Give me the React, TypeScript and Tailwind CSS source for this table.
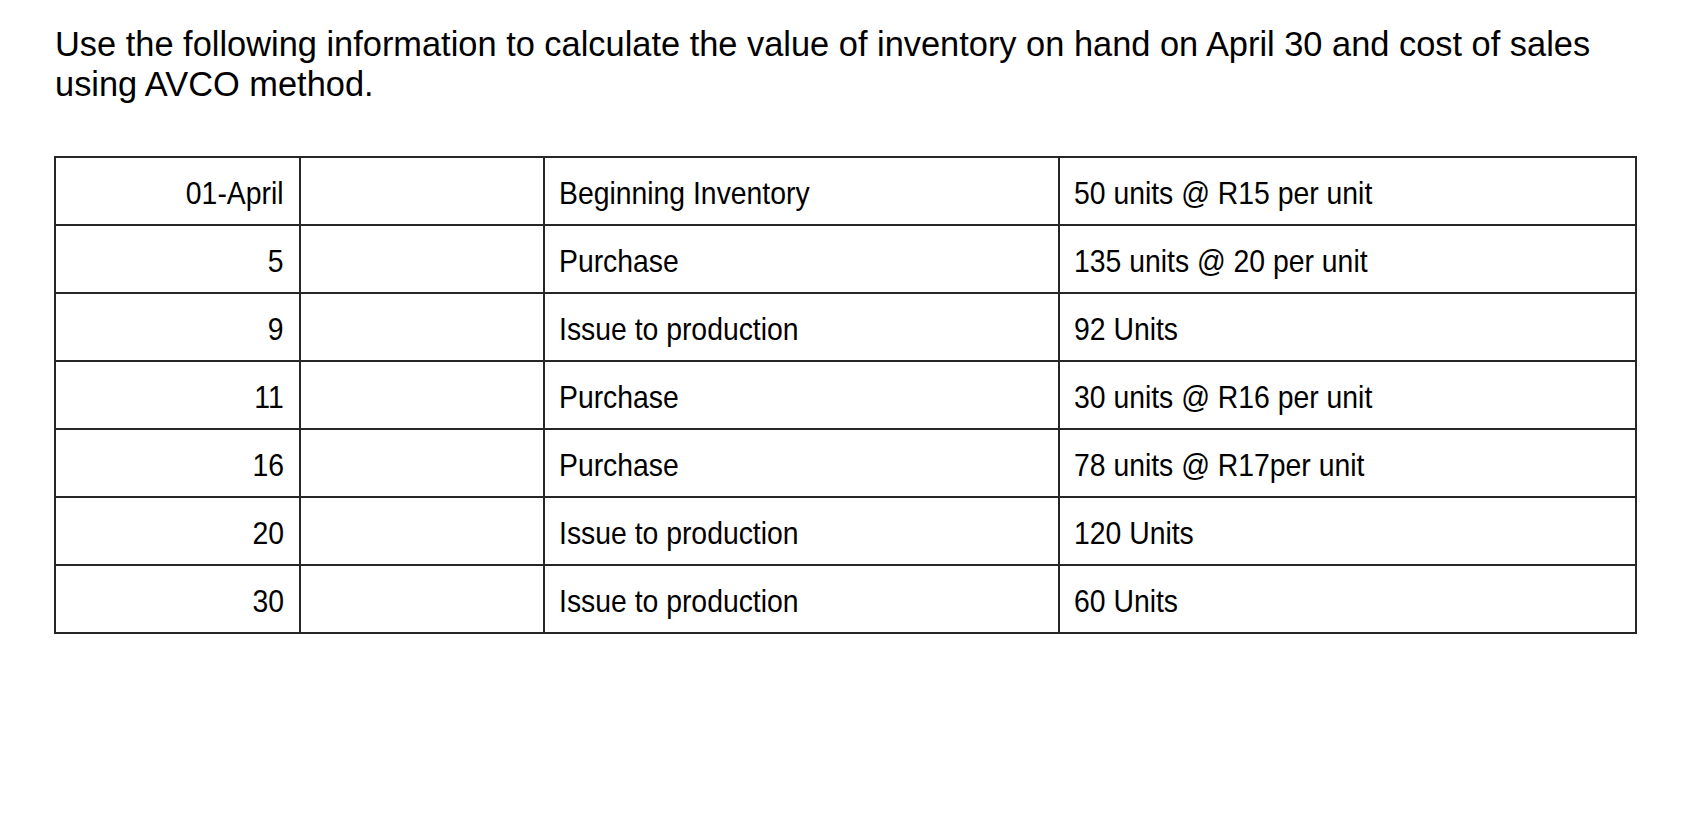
import React from "react";

const ROWS = [
  { day: "01-April", event: "Beginning Inventory", detail: "50 units @ R15 per unit" },
  { day: "5", event: "Purchase", detail: "135 units @ 20 per unit" },
  { day: "9", event: "Issue to production", detail: "92 Units" },
  { day: "11", event: "Purchase", detail: "30 units @ R16 per unit" },
  { day: "16", event: "Purchase", detail: "78 units @ R17per unit" },
  { day: "20", event: "Issue to production", detail: "120 Units" },
  { day: "30", event: "Issue to production", detail: "60 Units" },
];

const cell = "border-2 border-[#262626] h-[68px] align-top pt-[19px] leading-[32px] whitespace-nowrap";

// narrow face is not installed, so squeeze Liberation Sans a little
function Narrow({ children, right }: { children: React.ReactNode; right?: boolean }) {
  return (
    <span className={`inline-block scale-x-[0.9] ${right ? "origin-right" : "origin-left"}`}>
      {children}
    </span>
  );
}

export default function App() {
  return (
    <div className="w-[1693px] h-[835px] bg-white text-black overflow-hidden">
      <p className="ml-[55px] pt-[24px] w-[1570px] text-[34.4px] leading-[40px] font-['Liberation_Sans',Arial,sans-serif]">
        Use the following information to calculate the value of inventory on hand on April 30 and cost of sales
        using AVCO method.
      </p>

      <table className="ml-[54px] mt-[52px] w-[1581px] border-collapse table-fixed font-['Liberation_Sans',Arial,sans-serif] text-[31.5px]">
        <colgroup>
          <col className="w-[245px]" />
          <col className="w-[244px]" />
          <col className="w-[515px]" />
          <col className="w-[577px]" />
        </colgroup>
        <tbody>
          {ROWS.map((row) => (
            <tr key={row.day}>
              <td className={`${cell} text-right pr-[15px]`}>
                <Narrow right>{row.day}</Narrow>
              </td>
              <td className={cell} />
              <td className={`${cell} pl-[14px]`}>
                <Narrow>{row.event}</Narrow>
              </td>
              <td className={`${cell} pl-[14px]`}>
                <Narrow>{row.detail}</Narrow>
              </td>
            </tr>
          ))}
        </tbody>
      </table>
    </div>
  );
}
